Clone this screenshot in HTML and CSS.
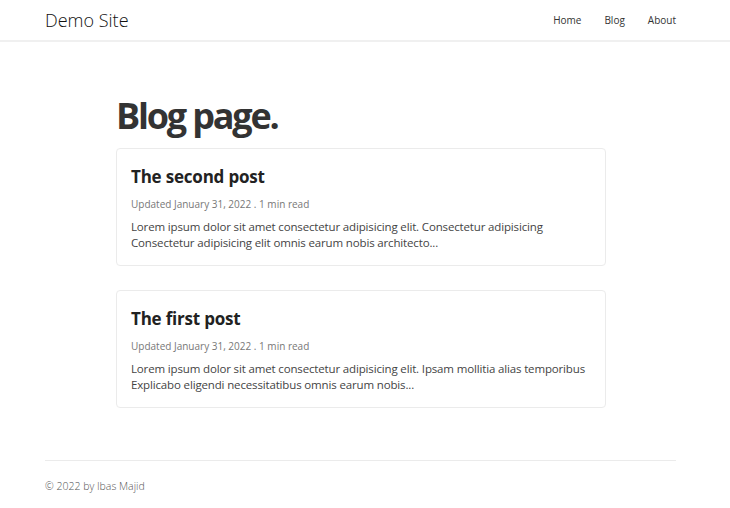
FILE: index.html
```html
<!DOCTYPE html>
<html>
<head>
<meta charset="utf-8">
<link rel="stylesheet" href="styles.css">
</head>
<body>
<header class="site-header">
  <div class="header-inner">
    <a class="brand" href="#">Demo Site</a>
    <nav class="nav">
      <a href="#">Home</a>
      <a href="#">Blog</a>
      <a href="#">About</a>
    </nav>
  </div>
</header>
<main class="main">
  <h1 class="page-title">Blog page.</h1>
  <article class="card">
    <h2 class="card-title">The second post</h2>
    <p class="meta">Updated January 31, 2022 . 1 min read</p>
    <p class="excerpt">Lorem ipsum dolor sit amet consectetur adipisicing elit. Consectetur adipisicing Consectetur adipisicing elit omnis earum nobis architecto...</p>
  </article>
  <article class="card">
    <h2 class="card-title">The first post</h2>
    <p class="meta">Updated January 31, 2022 . 1 min read</p>
    <p class="excerpt">Lorem ipsum dolor sit amet consectetur adipisicing elit. Ipsam mollitia alias temporibus Explicabo eligendi necessitatibus omnis earum nobis...</p>
  </article>
</main>
<footer class="footer">
  <div class="footer-inner">© 2022 by Ibas Majid</div>
</footer>
</body>
</html>
```
FILE: styles.css
```css
* { box-sizing: border-box; }
html, body { margin: 0; padding: 0; background: #fff; }
body {
  font-family: "Open Sans", "Noto Sans", sans-serif;
  color: #333;
}
.site-header {
  border-bottom: 2px solid #f0f0f0;
  height: 42px;
}
.header-inner {
  margin: 0 54px 0 45px;
  height: 40px;
  display: flex;
  align-items: center;
  justify-content: space-between;
}
.brand {
  font-size: 18px;
  font-weight: 300;
  color: #111;
  text-decoration: none;
  letter-spacing: 0;
}
.nav { display: flex; gap: 23px; }
.nav a {
  font-size: 10px;
  color: #333;
  text-decoration: none;
}
.main {
  width: 490px;
  margin: 0 auto 0 116px;
  padding-top: 48px;
}
.page-title {
  margin: 0 0 6px 0;
  font-size: 36px;
  font-weight: 700;
  letter-spacing: -2.2px;
  line-height: 52px;
  color: #333;
}
.card {
  border: 1px solid #ebebeb;
  border-radius: 4px;
  padding: 14px 14px 16px 14px;
  margin-bottom: 24px;
  height: 118px;
}
.card-title {
  margin: 0 0 6px 0;
  font-size: 17px;
  font-weight: 700;
  color: #222;
  line-height: 28px;
  letter-spacing: -0.2px;
}
.meta {
  margin: 0 0 8px 0;
  font-size: 10px;
  color: #777;
  line-height: 14px;
}
.excerpt {
  margin: 0;
  font-size: 11.5px;
  letter-spacing: -0.15px;
  line-height: 16px;
  color: #444;
}
.footer {
  margin: 52px 54px 0 45px;
  border-top: 1px solid #ebebeb;
}
.footer-inner {
  padding-top: 18px;
  font-size: 10.5px;
  font-weight: 300;
  color: #555;
}
```
